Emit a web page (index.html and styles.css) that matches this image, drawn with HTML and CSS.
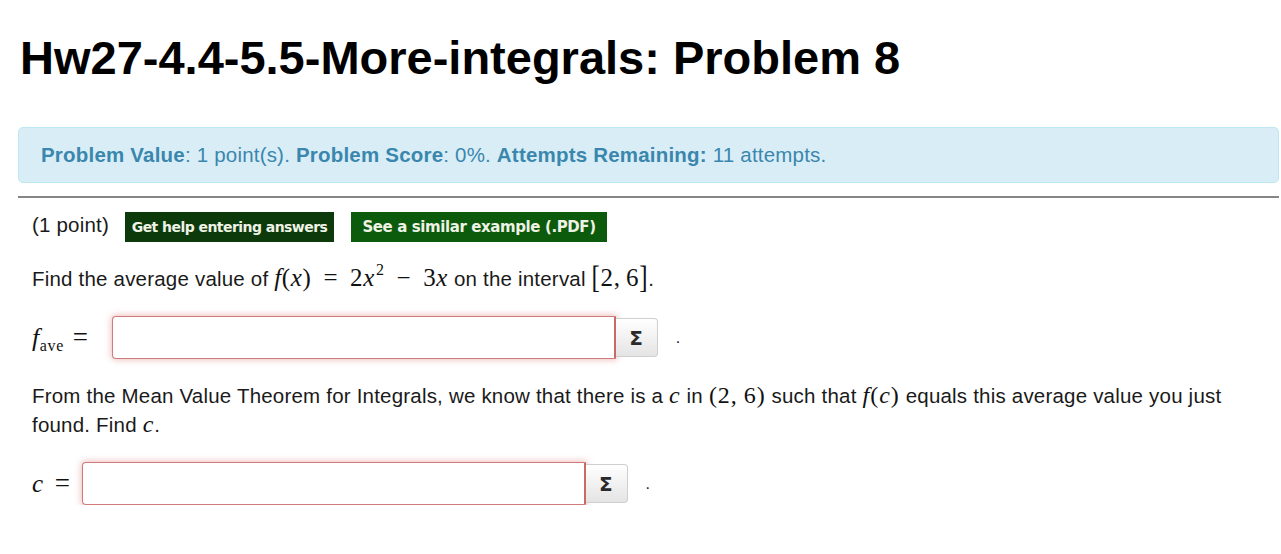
FILE: index.html
```html
<!DOCTYPE html>
<html>
<head>
<meta charset="utf-8">
<link rel="stylesheet" href="styles.css">
</head>
<body>
<div class="page">
  <h1 class="title">Hw27-4.4-5.5-More-integrals: Problem 8</h1>
  <div class="alert">
    <b>Problem Value</b>: 1 point(s). <b>Problem Score</b>: 0%. <b>Attempts Remaining:</b> 11 attempts.
  </div>
  <div class="rule"></div>
  <div class="problem">
    <div class="head-row">
      <span class="pts">(1 point)</span>
      <span class="btn btn-dark">Get help entering answers</span>
      <span class="btn btn-green">See a similar example (.PDF)</span>
    </div>
    <p class="line">Find the average value of <span class="m"><i>f</i>(<i>x</i>)<span class="op">=</span>2<i>x</i><sup>2</sup><span class="op">−</span>3<i>x</i></span> on the interval <span class="m"><span class="tall">[</span>2,&thinsp;6<span class="tall">]</span></span>.</p>
    <div class="answer-row first">
      <span class="m label"><i class="bigf">f</i><sub>ave</sub><span class="op">=</span></span>
      <span class="field"></span><span class="sigma">Σ</span><span class="dot">.</span>
    </div>
    <p class="para">From the Mean Value Theorem for Integrals, we know that there is a <span class="pm"><i>c</i></span> in <span class="pm">(2,&thinsp;6)</span> such that <span class="pm"><i>f</i>(<i>c</i>)</span> equals this average value you just<br>found. Find <span class="pm"><i>c</i></span>.</p>
    <div class="answer-row second">
      <span class="m label"><i>c</i><span class="op">=</span></span>
      <span class="field"></span><span class="sigma">Σ</span><span class="dot">.</span>
    </div>
  </div>
</div>
</body>
</html>
```

FILE: styles.css
```css
html, body {
  margin: 0;
  padding: 0;
  background: #ffffff;
}
.page {
  padding: 0 2px 0 18px;
  font-family: "Liberation Sans", Arial, sans-serif;
  font-size: 20.5px;
  letter-spacing: 0.2px;
  color: #222;
}
.title {
  margin: 0;
  padding-top: 28px;
  font-size: 47px;
  line-height: 60px;
  font-weight: bold;
  letter-spacing: 0;
  color: #000;
  padding-left: 2px;
}
.alert {
  margin-top: 39px;
  background: #d9edf7;
  border: 1px solid #bce8f1;
  border-radius: 5px;
  color: #3a87ad;
  padding: 14px 22px;
  line-height: 26px;
}
.rule {
  margin-top: 13px;
  height: 2px;
  background: #858585;
}
.problem {
  padding-left: 14px;
  color: #1a1a1a;
}
.head-row {
  display: flex;
  align-items: center;
  margin-top: 13px;
  height: 31px;
}
.pts {
  margin-right: 16px;
  margin-top: -4px;
}
.btn {
  display: inline-flex;
  align-items: center;
  justify-content: center;
  height: 30px;
  color: #eef3e6;
  font-family: "DejaVu Sans", sans-serif;
  font-weight: 700;
  box-sizing: border-box;
  letter-spacing: 0;
  white-space: nowrap;
}
.btn-dark {
  background: #0d3a0b;
  font-size: 14px;
  width: 209px;
  letter-spacing: -0.55px;
}
.btn-green {
  background: #0c5a0c;
  font-size: 15px;
  margin-left: 17px;
  width: 256px;
  letter-spacing: -0.4px;
}
.m, .pm {
  font-family: "Liberation Serif", "Times New Roman", serif;
  font-size: 25px;
  line-height: 1;
  color: #111;
  letter-spacing: 0.6px;
}
.pm {
  font-size: 24px;
  line-height: 0;
  letter-spacing: 1px;
}
.m i, .pm i {
  font-style: italic;
}
.op {
  margin: 0 12px;
}
.m sup {
  font-size: 16px;
  vertical-align: 11px;
  line-height: 0;
  margin-left: 1px;
}
.m sub {
  font-size: 16px;
  vertical-align: -5px;
  line-height: 0;
}
.tall {
  display: inline-block;
  transform: scaleY(1.25);
}
.line {
  margin: 22px 0 0 0;
  line-height: 30px;
}
.answer-row {
  display: flex;
  align-items: center;
  height: 43px;
}
.first {
  margin-top: 22px;
}
.label {
  margin-right: 23px;
}
.bigf {
  font-size: 26px;
}
.label .op {
  margin: 0 0 0 9px;
  font-size: 27px;
}
.field {
  display: block;
  width: 504px;
  height: 43px;
  box-sizing: border-box;
  background: #fff;
  border: 1px solid #cf7b7b;
  border-right: 2px solid #c96a6a;
  border-radius: 4px 0 0 4px;
  box-shadow: 0 0 6px 1px rgba(220, 110, 110, 0.45);
}
.sigma {
  display: flex;
  align-items: center;
  justify-content: center;
  width: 42px;
  height: 39px;
  box-sizing: border-box;
  border: 1px solid #cfcfcf;
  border-left: none;
  border-radius: 0 4px 4px 0;
  background: linear-gradient(#ffffff, #e4e4e4);
  font-family: "DejaVu Sans", sans-serif;
  font-weight: bold;
  font-size: 20px;
  color: #2a2a2a;
}
.dot {
  margin-left: 18px;
  font-size: 16px;
  color: #222;
}
.para {
  margin: 22px 0 0 0;
  line-height: 29px;
  padding-right: 40px;
}
.second {
  margin-top: 23px;
}
.second .label {
  margin-right: 11px;
}
.second .label .op {
  margin-left: 11px;
}
```
